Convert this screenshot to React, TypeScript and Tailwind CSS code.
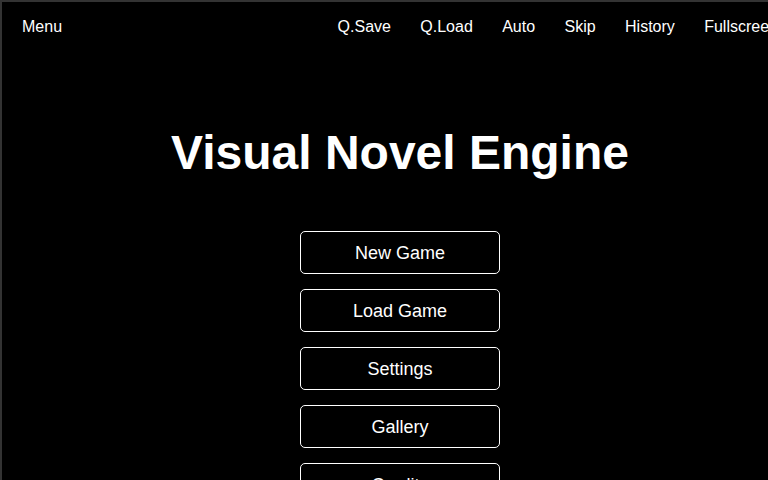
import React from "react";

export default function App() {
  const nav = ["Q.Save", "Q.Load", "Auto", "Skip", "History", "Fullscreen"];
  const buttons = ["New Game", "Load Game", "Settings", "Gallery", "Credits", "Quit"];
  return (
    <div
      className="w-[800px] h-[600px] border-2 border-[#333] bg-black text-white"
      style={{ fontFamily: '"Liberation Sans", Arial, sans-serif' }}
    >
      <div className="flex justify-between items-center pl-[20px] pr-[20px] pt-[16px] pb-[15px] text-[16px] leading-[18px]">
        <div>Menu</div>
        <div className="flex gap-[29.4px]">
          {nav.map((n) => (
            <span key={n}>{n}</span>
          ))}
        </div>
      </div>
      <div className="flex flex-col items-center">
        <h1 className="mt-[74px] mb-[51px] text-[48px] leading-[55px] font-bold">Visual Novel Engine</h1>
        <div className="flex flex-col gap-[15px]">
          {buttons.map((b) => (
            <button
              key={b}
              className="w-[200px] pt-[11px] pb-[9px] text-[18px] leading-[21px] border border-white rounded-[5px] bg-black text-white"
            >
              {b}
            </button>
          ))}
        </div>
      </div>
    </div>
  );
}
